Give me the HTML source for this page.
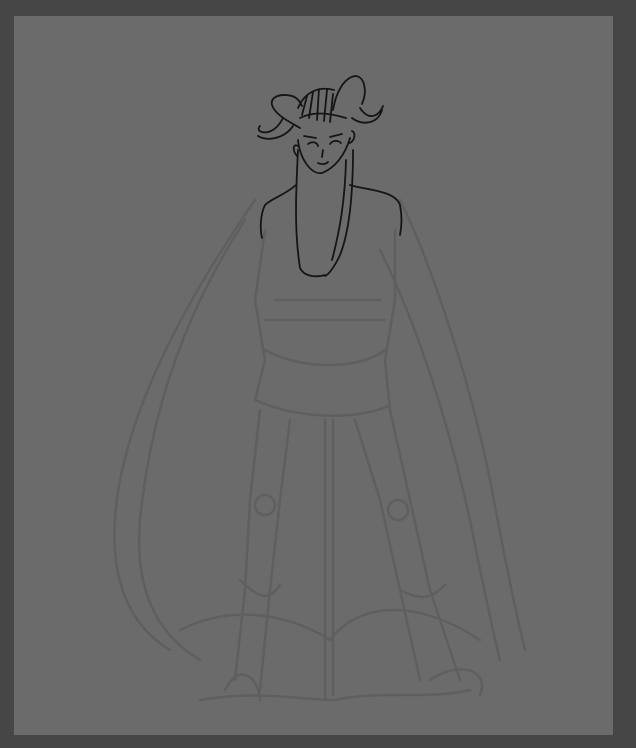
<!DOCTYPE html>
<html><head><meta charset="utf-8"><style>
html,body{margin:0;padding:0;background:#464646;width:636px;height:748px;overflow:hidden}
svg{position:absolute;left:0;top:0}
</style></head><body>
<svg width="636" height="748" viewBox="0 0 636 748">
<rect x="0" y="0" width="636" height="748" fill="#464646"/>
<rect x="14" y="16" width="599" height="719" fill="#6b6b6b"/>
<g fill="none" stroke="#5e5e5e" stroke-width="2.5" stroke-linecap="round" opacity="0.9">
<path d="M255 200 C200 280 140 380 120 480 C105 560 120 620 170 650"/>
<path d="M245 220 C180 320 150 420 140 520 C135 580 150 630 200 660"/>
<path d="M400 200 C430 260 470 380 490 480 C505 560 515 610 525 650"/>
<path d="M380 250 C420 330 450 430 470 520 C480 570 490 620 500 660"/>
<path d="M265 230 L255 300 L265 360 L255 400"/>
<path d="M395 230 L395 300 L385 360 L390 410"/>
<path d="M275 300 L380 300 M265 320 L385 320"/>
<path d="M265 350 C300 370 360 370 385 350"/>
<path d="M255 400 C300 420 360 420 390 405"/>
<path d="M260 410 L250 500 L245 590 L235 680"/>
<path d="M290 420 L280 500 L270 590 L260 690"/>
<path d="M355 420 L380 500 L400 590 L420 680"/>
<path d="M390 410 L410 500 L430 590 L460 680"/>
<path d="M325 420 L325 700 M333 420 L333 695"/>
<path d="M225 690 C240 660 260 680 260 700"/>
<path d="M430 680 C460 660 490 670 480 695"/>
<path d="M180 630 C240 600 300 620 330 640 C360 600 420 600 480 640"/>
<path d="M200 700 C260 690 300 700 335 700 C380 690 430 700 470 690"/>
<circle cx="265" cy="505" r="10"/><circle cx="398" cy="510" r="10"/>
<path d="M240 580 C260 600 270 600 280 585"/>
<path d="M400 590 C420 600 430 600 445 585"/>
</g>
<g fill="none" stroke="#151515" stroke-width="1.8" stroke-linecap="round" stroke-linejoin="round">
<!-- left horn -->
<path d="M300 128 C290 122 275 115 272 105 C270 97 280 93 292 96 C298 98 300 102 302 106"/>
<path d="M283 118 C278 128 270 134 262 132 C258 131 258 128 260 126"/>
<path d="M293 126 C285 138 268 142 258 136"/>
<!-- right horn -->
<path d="M333 110 C336 92 344 78 355 76 C364 76 368 90 362 104"/>
<path d="M360 108 C368 120 378 118 383 106"/>
<path d="M352 118 C362 126 378 124 382 110"/>
<!-- hair -->
<path d="M298 108 C305 92 318 86 334 90"/>
<path d="M302 115 L307 96 M309 118 L313 92 M317 120 L319 89 M324 121 L327 90 M330 122 L333 94"/>
<path d="M300 118 C312 112 326 112 346 118"/>
<!-- face -->
<path d="M298 140 C300 160 312 175 322 173 C335 168 345 155 350 138"/>
<path d="M298 146 C293 143 292 150 297 156"/>
<path d="M352 131 C356 133 355 140 350 143"/>
<path d="M304 136 L316 138 M330 137 L342 134"/>
<path d="M308 144 C312 141 317 142 318 146 M330 144 C333 140 338 140 341 143"/>
<path d="M323 150 L322 157"/>
<path d="M318 163 C322 165 326 164 328 162"/>
<!-- shoulders & strands -->
<path d="M296 185 C285 195 272 198 265 205 C260 215 260 230 262 238"/>
<path d="M350 185 C365 190 395 190 400 205 C402 215 402 225 400 235"/>
<path d="M298 150 C296 190 294 230 300 268 C305 278 318 277 325 275"/>
<path d="M353 150 C353 190 350 230 340 255 C334 268 328 275 325 276"/>
<path d="M346 160 C345 200 340 230 332 260"/>
</g>
</svg>
</body></html>
